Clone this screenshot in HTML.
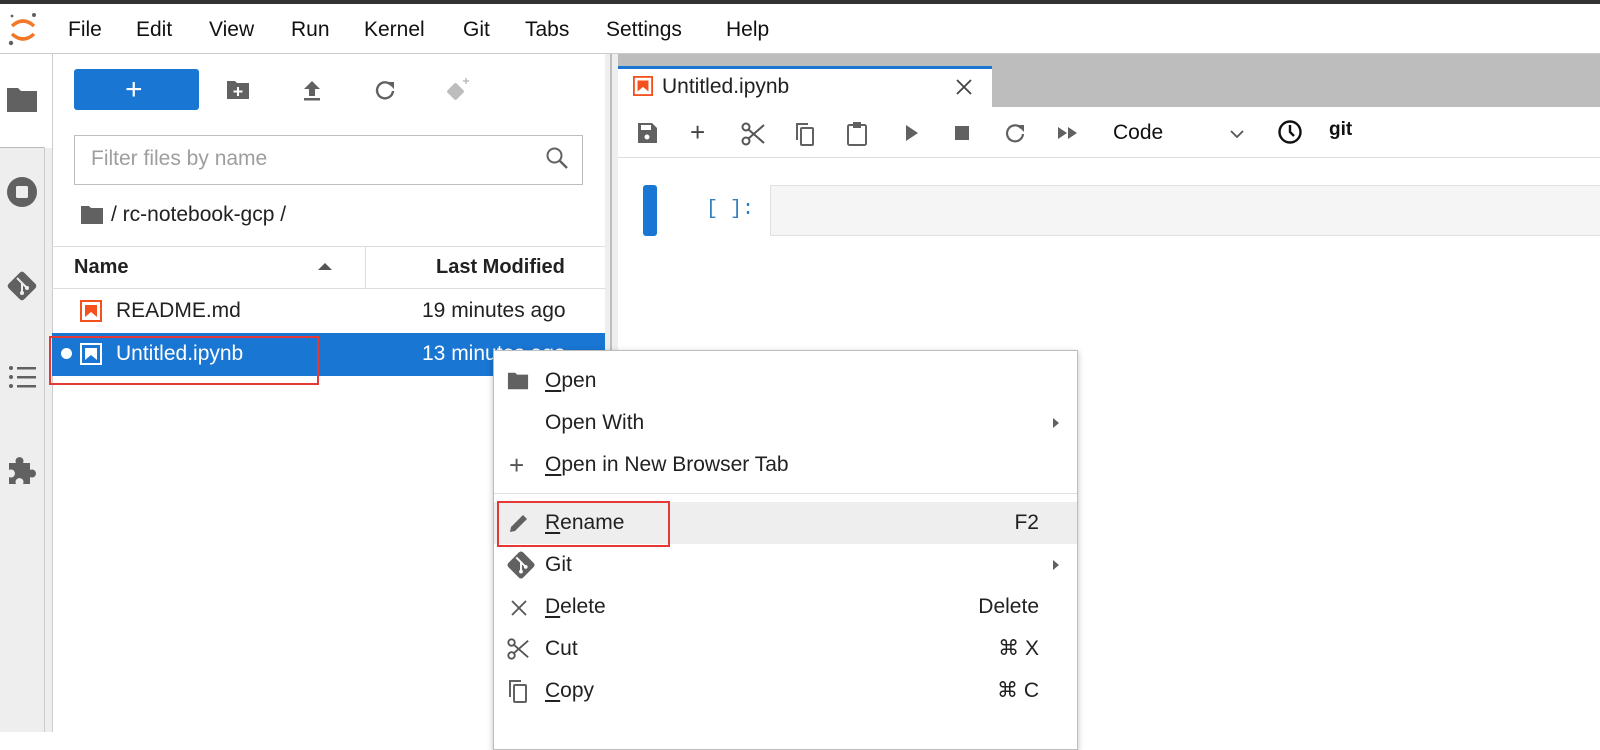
<!DOCTYPE html>
<html><head><meta charset="utf-8">
<style>
*{box-sizing:border-box;margin:0;padding:0}
body{width:1600px;height:732px;overflow:hidden;background:#fff;font-family:"Liberation Sans",Arial,sans-serif;color:#212121;position:relative}
.abs{position:absolute}
.menu span{position:absolute;top:18px;font-size:21px;color:#111}
.ic{position:absolute}
.cm{position:absolute;left:493px;top:350px;width:585px;height:400px;background:#fff;border:1px solid #bdbdbd;box-shadow:0 2px 6px rgba(0,0,0,.25)}
.it{position:absolute;left:0;width:583px;height:42px;font-size:21px;line-height:42px}
.it .t{position:absolute;left:51px}
.it .k{position:absolute;right:38px}
.it u{text-decoration:underline;text-underline-offset:3px}
.arr{position:absolute;right:18px;top:16px;width:0;height:0;border-left:6px solid #616161;border-top:5px solid transparent;border-bottom:5px solid transparent}
</style></head><body>
<div class="abs" style="left:0;top:0;width:1600px;height:4px;background:#333"></div>
<div class="abs" style="left:0;top:53px;width:1600px;height:1px;background:#ccc"></div>
<svg class="ic" style="left:6px;top:10px" width="34" height="38" viewBox="0 0 34 38">
<path d="M6 16 Q17 6 28 16" stroke="#f37726" stroke-width="3.5" fill="none"/>
<path d="M6 24 Q17 34 28 24" stroke="#f37726" stroke-width="3.5" fill="none"/>
<circle cx="28" cy="5" r="2" fill="#616161"/><circle cx="5" cy="33" r="2.2" fill="#616161"/><circle cx="6" cy="6" r="1.4" fill="#616161"/>
</svg>
<div class="menu">
<span style="left:68px">File</span><span style="left:136px">Edit</span><span style="left:209px">View</span><span style="left:291px">Run</span><span style="left:364px">Kernel</span><span style="left:463px">Git</span><span style="left:525px">Tabs</span><span style="left:606px">Settings</span><span style="left:726px">Help</span>
</div>
<div class="abs" style="left:0;top:148px;width:52px;height:584px;background:#eee"></div>
<div class="abs" style="left:0;top:147px;width:44px;height:1px;background:#bbb"></div>
<div class="abs" style="left:44px;top:147px;width:1px;height:585px;background:#ccc"></div>
<div class="abs" style="left:52px;top:54px;width:1px;height:678px;background:#ccc"></div>
<svg class="ic" style="left:6px;top:85px" width="32" height="28" viewBox="0 0 32 28"><path d="M1 3h11l3 3h16v21H1z" fill="#616161"/></svg>
<svg class="ic" style="left:5px;top:175px" width="34" height="34" viewBox="0 0 34 34"><circle cx="17" cy="17" r="15" fill="#616161"/><rect x="11" y="11" width="12" height="12" rx="1.5" fill="#eee"/></svg>
<svg class="ic" style="left:4px;top:268px" width="36" height="36" viewBox="0 0 36 36"><rect x="7" y="7" width="22" height="22" rx="3" transform="rotate(45 18 18)" fill="#616161"/><path d="M13 10l5 5v9M18 15l5 5" stroke="#eee" stroke-width="2" fill="none"/><circle cx="18" cy="25" r="2" fill="#eee"/><circle cx="23" cy="20" r="2" fill="#eee"/></svg>
<svg class="ic" style="left:8px;top:364px" width="30" height="26" viewBox="0 0 30 26"><g fill="#616161"><circle cx="3" cy="4" r="2"/><circle cx="3" cy="13" r="2"/><circle cx="3" cy="22" r="2"/><rect x="9" y="3" width="19" height="2.5"/><rect x="9" y="12" width="19" height="2.5"/><rect x="9" y="21" width="19" height="2.5"/></g></svg>
<svg class="ic" style="left:7px;top:455px" width="32" height="32" viewBox="0 0 32 32"><path d="M2 8h7a4 4 0 1 1 7 0h7v7a4 4 0 1 1 0 7v7h-7a4 4 0 1 0-7 0H2v-7a4 4 0 1 0 0-7z" fill="#616161"/></svg>
<div class="abs" style="left:74px;top:69px;width:125px;height:41px;background:#1976d2;border-radius:3px"></div>
<div class="abs" style="left:125px;top:73px;color:#fff;font-size:30px">+</div>
<svg class="ic" style="left:226px;top:80px" width="24" height="20" viewBox="0 0 24 20"><path d="M1 1h8l2 2h12v16H1z" fill="#616161"/><path d="M12 7v9M7.5 11.5h9" stroke="#fff" stroke-width="2"/></svg>
<svg class="ic" style="left:302px;top:80px" width="20" height="22" viewBox="0 0 20 22"><path d="M10 1l8 8h-5v7H7V9H2z" fill="#616161"/><rect x="2" y="18" width="16" height="2.5" fill="#616161"/></svg>
<svg class="ic" style="left:374px;top:79px" width="22" height="22" viewBox="0 0 22 22"><path d="M17 6A8 8 0 1 0 19 12" stroke="#616161" stroke-width="2.4" fill="none"/><path d="M13 3h7v7z" fill="#616161"/></svg>
<svg class="ic" style="left:444px;top:76px" width="28" height="28" viewBox="0 0 28 28"><rect x="5" y="9" width="13" height="13" rx="2" transform="rotate(45 11.5 15.5)" fill="#bdbdbd"/><path d="M22 2v6M19 5h6" stroke="#bdbdbd" stroke-width="1.5"/></svg>
<div class="abs" style="left:74px;top:135px;width:509px;height:50px;border:1px solid #bdbdbd"></div>
<div class="abs" style="left:91px;top:147px;font-size:21px;color:#9e9e9e">Filter files by name</div>
<svg class="ic" style="left:545px;top:146px" width="24" height="24" viewBox="0 0 24 24"><circle cx="9.5" cy="9.5" r="7" stroke="#616161" stroke-width="2" fill="none"/><path d="M15 15l7 7" stroke="#616161" stroke-width="2.4"/></svg>
<svg class="ic" style="left:80px;top:205px" width="24" height="20" viewBox="0 0 24 20"><path d="M1 1h8l2 2h12v16H1z" fill="#616161"/></svg>
<div class="abs" style="left:111px;top:203px;font-size:21px">/ rc-notebook-gcp /</div>
<div class="abs" style="left:52px;top:246px;width:553px;height:1px;background:#ddd"></div>
<div class="abs" style="left:52px;top:288px;width:553px;height:1px;background:#ddd"></div>
<div class="abs" style="left:365px;top:247px;width:1px;height:41px;background:#ddd"></div>
<div class="abs" style="left:74px;top:256px;font-size:20px;font-weight:bold">Name</div>
<div class="abs" style="left:318px;top:263px;border-left:7px solid transparent;border-right:7px solid transparent;border-bottom:7px solid #555"></div>
<div class="abs" style="left:436px;top:256px;font-size:20px;font-weight:bold">Last Modified</div>
<svg class="ic" style="left:80px;top:300px" width="22" height="22" viewBox="0 0 22 22"><rect x="1" y="1" width="20" height="20" fill="none" stroke="#f4511e" stroke-width="2"/><path d="M5 5h12v12l-6-5-6 5z" fill="#f4511e"/></svg>
<div class="abs" style="left:116px;top:299px;font-size:21px">README.md</div>
<div class="abs" style="left:422px;top:299px;font-size:21px">19 minutes ago</div>
<div class="abs" style="left:52px;top:333px;width:553px;height:43px;background:#1976d2"></div>
<div class="abs" style="left:61px;top:348px;width:11px;height:11px;border-radius:50%;background:#fff"></div>
<svg class="ic" style="left:80px;top:343px" width="22" height="22" viewBox="0 0 22 22"><rect x="1" y="1" width="20" height="20" fill="none" stroke="#fff" stroke-width="2"/><path d="M5 5h12v12l-6-5-6 5z" fill="#fff"/></svg>
<div class="abs" style="left:116px;top:342px;font-size:21px;color:#fff">Untitled.ipynb</div>
<div class="abs" style="left:422px;top:342px;font-size:21px;color:#fff">13 minutes ago</div>
<div class="abs" style="left:49px;top:336px;width:270px;height:49px;border:2px solid #e53935"></div>
<div class="abs" style="left:605px;top:54px;width:13px;height:678px;background:#eee"></div>
<div class="abs" style="left:610px;top:54px;width:2px;height:678px;background:#bdbdbd"></div>
<div class="abs" style="left:618px;top:54px;width:982px;height:53px;background:#bdbdbd"></div>
<div class="abs" style="left:618px;top:66px;width:374px;height:42px;background:#fff;border-top:3px solid #1976d2"></div>
<svg class="ic" style="left:633px;top:76px" width="20" height="20" viewBox="0 0 22 22"><rect x="1" y="1" width="20" height="20" fill="none" stroke="#f4511e" stroke-width="2"/><path d="M5 5h12v12l-6-5-6 5z" fill="#f4511e"/></svg>
<div class="abs" style="left:662px;top:75px;font-size:21px">Untitled.ipynb</div>
<svg class="ic" style="left:955px;top:78px" width="18" height="18" viewBox="0 0 18 18"><path d="M2 2l14 14M16 2L2 16" stroke="#444" stroke-width="1.8"/></svg>
<div class="abs" style="left:618px;top:157px;width:982px;height:1px;background:#ddd"></div>
<svg class="ic" style="left:636px;top:122px" width="22" height="22" viewBox="0 0 22 22"><path d="M2 1h14l5 5v15H2z" fill="#616161"/><rect x="5" y="3" width="10" height="5" fill="#fff"/><circle cx="11" cy="15" r="2.5" fill="#fff"/></svg>
<div class="abs" style="left:690px;top:117px;font-size:26px;color:#444">+</div>
<svg class="ic" style="left:740px;top:121px" width="26" height="26" viewBox="0 0 26 26"><circle cx="6" cy="6" r="3.5" stroke="#555" stroke-width="2" fill="none"/><circle cx="6" cy="20" r="3.5" stroke="#555" stroke-width="2" fill="none"/><path d="M8.5 8.5L24 22M8.5 17.5L24 4" stroke="#555" stroke-width="2"/></svg>
<svg class="ic" style="left:793px;top:121px" width="24" height="26" viewBox="0 0 24 26"><path d="M4 19V3h11" stroke="#616161" stroke-width="2" fill="none"/><rect x="8" y="7" width="12" height="17" rx="1" stroke="#616161" stroke-width="2" fill="none"/></svg>
<svg class="ic" style="left:845px;top:120px" width="24" height="27" viewBox="0 0 24 27"><rect x="3" y="5" width="18" height="20" rx="1.5" stroke="#616161" stroke-width="2" fill="none"/><rect x="8" y="2" width="8" height="6" fill="#616161"/></svg>
<svg class="ic" style="left:904px;top:124px" width="16" height="18" viewBox="0 0 16 18"><path d="M2 1l12 8-12 8z" fill="#616161"/></svg>
<div class="abs" style="left:955px;top:126px;width:14px;height:14px;background:#616161"></div>
<svg class="ic" style="left:1004px;top:122px" width="22" height="22" viewBox="0 0 22 22"><path d="M17 6A8 8 0 1 0 19 12" stroke="#616161" stroke-width="2.2" fill="none"/><path d="M13 3h7v7z" fill="#616161"/></svg>
<svg class="ic" style="left:1057px;top:126px" width="22" height="14" viewBox="0 0 22 14"><path d="M1 1l9 6-9 6zM11 1l9 6-9 6z" fill="#616161"/></svg>
<div class="abs" style="left:1113px;top:121px;font-size:21px;color:#111">Code</div>
<svg class="ic" style="left:1229px;top:128px" width="16" height="12" viewBox="0 0 16 12"><path d="M2 3l6 6 6-6" stroke="#555" stroke-width="1.8" fill="none"/></svg>
<svg class="ic" style="left:1277px;top:119px" width="26" height="26" viewBox="0 0 26 26"><circle cx="13" cy="13" r="10.5" stroke="#111" stroke-width="2.4" fill="none"/><path d="M13 6v7l4 4" stroke="#111" stroke-width="2.4" fill="none"/></svg>
<div class="abs" style="left:1329px;top:119px;font-size:19px;font-weight:bold;color:#111">git</div>
<div class="abs" style="left:643px;top:185px;width:14px;height:51px;background:#1976d2;border-radius:3px"></div>
<div class="abs" style="left:706px;top:198px;font-family:'Liberation Mono',monospace;font-size:20px;color:#307fc1">[ ]:</div>
<div class="abs" style="left:770px;top:185px;width:840px;height:51px;background:#f5f5f5;border:1px solid #e0e0e0"></div>
<div class="cm">
<div class="it" style="top:9px"><svg class="ic" style="left:13px;top:11px" width="22" height="20" viewBox="0 0 24 20"><path d="M1 1h8l2 2h12v16H1z" fill="#616161"/></svg><span class="t"><u>O</u>pen</span></div>
<div class="it" style="top:51px"><span class="t">Open With</span><div class="arr"></div></div>
<div class="it" style="top:93px"><span class="ic" style="left:15px;top:0;font-size:26px;color:#555">+</span><span class="t"><u>O</u>pen in New Browser Tab</span></div>
<div class="abs" style="left:0;top:142px;width:583px;height:1px;background:#e0e0e0"></div>
<div class="it" style="top:151px;background:#eee"><svg class="ic" style="left:14px;top:10px" width="22" height="22" viewBox="0 0 22 22"><path d="M2 20l1-5L15 3l4 4L7 19z" fill="#616161"/></svg><span class="t"><u>R</u>ename</span><span class="k">F2</span></div>
<div class="it" style="top:193px"><svg class="ic" style="left:10px;top:4px" width="34" height="34" viewBox="0 0 36 36"><rect x="7" y="7" width="22" height="22" rx="3" transform="rotate(45 18 18)" fill="#616161"/><path d="M13 10l5 5v9M18 15l5 5" stroke="#fff" stroke-width="2" fill="none"/><circle cx="18" cy="25" r="2" fill="#fff"/><circle cx="23" cy="20" r="2" fill="#fff"/></svg><span class="t">Git</span><div class="arr"></div></div>
<div class="it" style="top:235px"><svg class="ic" style="left:16px;top:13px" width="18" height="18" viewBox="0 0 18 18"><path d="M2 2l14 14M16 2L2 16" stroke="#555" stroke-width="1.8"/></svg><span class="t"><u>D</u>elete</span><span class="k">Delete</span></div>
<div class="it" style="top:277px"><svg class="ic" style="left:12px;top:8px" width="24" height="26" viewBox="0 0 26 26"><circle cx="6" cy="6" r="3.5" stroke="#555" stroke-width="2" fill="none"/><circle cx="6" cy="20" r="3.5" stroke="#555" stroke-width="2" fill="none"/><path d="M8.5 8.5L24 22M8.5 17.5L24 4" stroke="#555" stroke-width="2"/></svg><span class="t">Cut</span><span class="k">⌘ X</span></div>
<div class="it" style="top:319px"><svg class="ic" style="left:12px;top:8px" width="24" height="26" viewBox="0 0 24 26"><path d="M4 19V3h11" stroke="#616161" stroke-width="2" fill="none"/><rect x="8" y="7" width="12" height="17" rx="1" stroke="#616161" stroke-width="2" fill="none"/></svg><span class="t"><u>C</u>opy</span><span class="k">⌘ C</span></div>
</div>
<div class="abs" style="left:497px;top:501px;width:173px;height:46px;border:2px solid #e53935"></div>
</body></html>
